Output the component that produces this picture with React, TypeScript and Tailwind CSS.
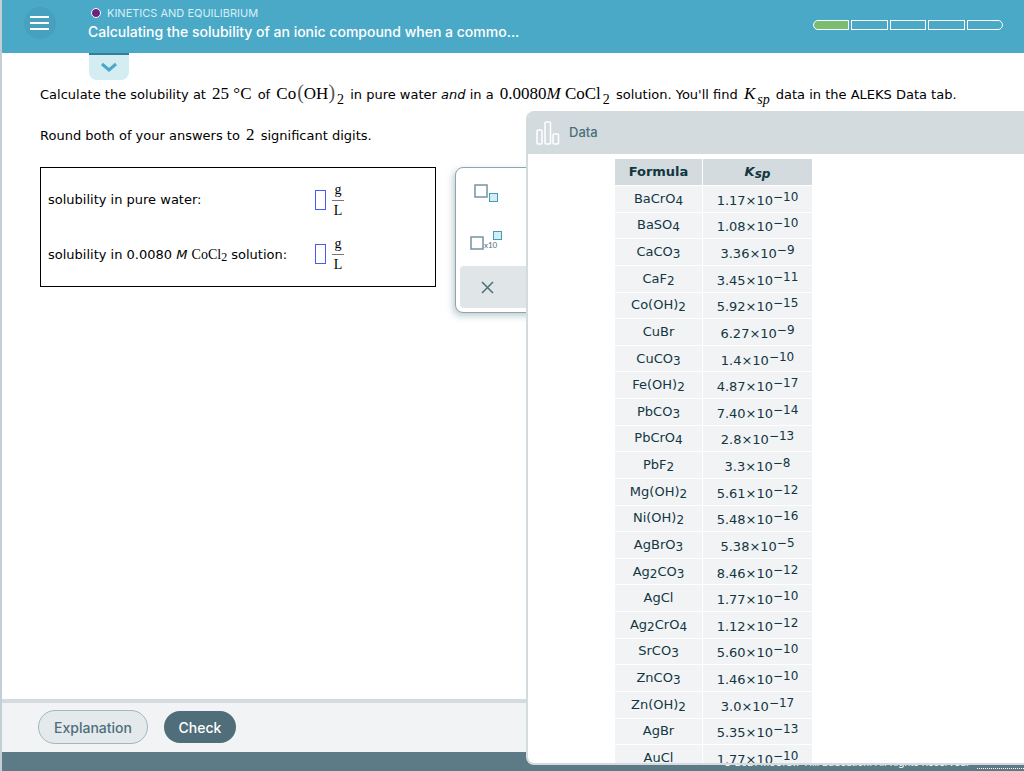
import React, { useState } from 'react';

interface KspRow {
  formula: string;
  value: string;
  exponent: string;
}

const kspData: KspRow[] = [
  { formula: 'BaCrO4', value: '1.17', exponent: '10' },
  { formula: 'BaSO4', value: '1.08', exponent: '10' },
  { formula: 'CaCO3', value: '3.36', exponent: '9' },
  { formula: 'CaF2', value: '3.45', exponent: '11' },
  { formula: 'Co(OH)2', value: '5.92', exponent: '15' },
  { formula: 'CuBr', value: '6.27', exponent: '9' },
  { formula: 'CuCO3', value: '1.4', exponent: '10' },
  { formula: 'Fe(OH)2', value: '4.87', exponent: '17' },
  { formula: 'PbCO3', value: '7.40', exponent: '14' },
  { formula: 'PbCrO4', value: '2.8', exponent: '13' },
  { formula: 'PbF2', value: '3.3', exponent: '8' },
  { formula: 'Mg(OH)2', value: '5.61', exponent: '12' },
  { formula: 'Ni(OH)2', value: '5.48', exponent: '16' },
  { formula: 'AgBrO3', value: '5.38', exponent: '5' },
  { formula: 'Ag2CO3', value: '8.46', exponent: '12' },
  { formula: 'AgCl', value: '1.77', exponent: '10' },
  { formula: 'Ag2CrO4', value: '1.12', exponent: '12' },
  { formula: 'SrCO3', value: '5.60', exponent: '10' },
  { formula: 'ZnCO3', value: '1.46', exponent: '10' },
  { formula: 'Zn(OH)2', value: '3.0', exponent: '17' },
  { formula: 'AgBr', value: '5.35', exponent: '13' },
  { formula: 'AuCl', value: '1.77', exponent: '10' },
];

// Digits of a formula are set as subscripts
const Formula: React.FC<{ text: string }> = ({ text }) => (
  <>
    {text.split(/(\d)/).map((part, i) =>
      /\d/.test(part) ? <sub key={i} className="-bottom-[2px] text-[12px]">{part}</sub> : <span key={i}>{part}</span>
    )}
  </>
);

const Serif: React.FC<{ children: React.ReactNode }> = ({ children }) => (
  <span className="mx-[2px] font-['Liberation_Serif',serif] text-[17px]">{children}</span>
);

const SerifSub: React.FC<{ children: React.ReactNode }> = ({ children }) => (
  <sub className="-bottom-[5px] ml-[2px] text-[14px]">{children}</sub>
);

const AnswerField: React.FC<{ id: string; value: string; onChange: (v: string) => void }> = ({ id, value, onChange }) => (
  <div className="flex items-center gap-[6px]">
    <input
      id={id}
      value={value}
      onChange={(e) => onChange(e.target.value)}
      className="h-5 w-[11px] border border-[#4a5cf0] bg-white text-[13px] outline-none"
    />
    <span className="flex w-3 flex-col items-center font-['Liberation_Serif',serif] text-[14px] leading-[20px]">
      <span className="w-full border-b border-[#777] text-center">g</span>
      <span>L</span>
    </span>
  </div>
);

const Header: React.FC = () => (
  <header className="flex h-[53px] shrink-0 bg-[#4ba9c8] pl-[22px] pr-[21px] text-white">
    <button aria-label="Menu" className="mt-[7px] flex size-8 items-center justify-center rounded-full bg-[#46a0be]">
      <svg width="20" height="16" viewBox="0 0 20 16" stroke="white" strokeWidth="2">
        <path d="M0 2h19M0 8h19M0 14h19" />
      </svg>
    </button>
    <div className="ml-8 min-w-0 flex-1 pt-[5px]">
      <p className="flex items-center gap-[6px] pl-[3px] text-[11px] leading-4 text-[#d5eff6]">
        <span className="size-[10px] rounded-full border border-white bg-[#6b2382]" />
        KINETICS AND EQUILIBRIUM
      </p>
      <h1 className="truncate text-[14px] font-medium leading-[22px]">
        Calculating the solubility of an ionic compound when a commo...
      </h1>
    </div>
    <div className="mt-5 flex h-[10px] w-[190px] gap-[2px]">
      <span className="flex-1 rounded-l-full border border-white bg-[#7bbd70]" />
      <span className="flex-1 border border-white" />
      <span className="flex-1 border border-white" />
      <span className="flex-1 border border-white" />
      <span className="flex-1 rounded-r-full border border-white" />
    </div>
  </header>
);

const MathTools: React.FC = () => (
  <div className="flex h-[146px] w-36 flex-col rounded-lg border border-[#8fa5ad] bg-white p-1 shadow-[-2px_3px_7px_rgba(70,110,125,0.35)]">
    <button aria-label="Subscript" className="flex h-11 items-center pl-[14px]">
      <svg width="26" height="20" viewBox="0 0 26 20">
        <rect x="1" y="1" width="12" height="12" fill="white" stroke="#7893a0" strokeWidth="1.5" />
        <rect x="15.5" y="9.5" width="8" height="8" fill="#d3edf2" stroke="#439db8" />
      </svg>
    </button>
    <button aria-label="Scientific notation" className="flex h-[50px] items-center pl-[10px]">
      <svg width="36" height="22" viewBox="0 0 36 22">
        <rect x="1" y="7" width="12" height="12" fill="white" stroke="#7893a0" strokeWidth="1.5" />
        <text x="14" y="18" fontSize="8" fontFamily="Lato, sans-serif" fill="#4c6f7c">x10</text>
        <rect x="23.5" y="1.5" width="8" height="8" fill="#d3edf2" stroke="#439db8" />
      </svg>
    </button>
    <button aria-label="Clear" className="flex flex-1 items-center rounded bg-[#e0e5e8] pl-[21px]">
      <svg width="13" height="13" viewBox="0 0 13 13" stroke="#4c6f7c" strokeWidth="1.5">
        <path d="M1 1l11 11M12 1L1 12" />
      </svg>
    </button>
  </div>
);

const DataPanel: React.FC = () => (
  <aside className="absolute bottom-[6px] left-[524px] right-0 top-[111px] flex flex-col overflow-hidden rounded-l-lg border-b-2 border-l-2 border-[#d3dbde] bg-white">
    <h2 className="flex h-[43px] shrink-0 items-center gap-[9px] bg-[#d3dbde] pl-2 text-[13px] font-medium text-[#4c6f7c]">
      <svg width="24" height="24" viewBox="0 0 24 24" fill="none" stroke="white" strokeWidth="1.5">
        <rect x="1" y="9" width="5" height="14" rx="1" />
        <rect x="9" y="1" width="5.500" height="22" rx="1" />
        <rect x="17" y="13" width="5.500" height="10" rx="1" />
      </svg>
      Data
    </h2>
    <div className="min-h-0 flex-1 overflow-hidden pl-[86px] pt-1">
      <table className="h-[614px] w-[199px] table-fixed border-separate border-spacing-[1px] text-center font-['DejaVu_Sans',sans-serif] text-[13px] leading-[18px] text-[#123642]">
        <thead>
          <tr className="h-[26px] bg-[#d3dbde]">
            <th className="h-[26px] w-[87px] p-0">Formula</th>
            <th className="h-[26px] p-0 italic">K<sub className="-bottom-[2px] text-[12px]">sp</sub></th>
          </tr>
        </thead>
        <tbody>
          {kspData.map((row) => (
            <tr key={row.formula} className="bg-[#f1f3f5]">
              <td className="p-0"><Formula text={row.formula} /></td>
              <td className="p-0 pt-1">
                {row.value}×10<sup className="-top-1 text-[12px]">−{row.exponent}</sup>
              </td>
            </tr>
          ))}
        </tbody>
      </table>
    </div>
  </aside>
);

const App: React.FC = () => {
  const [pureWater, setPureWater] = useState('');
  const [solution, setSolution] = useState('');

  return (
    <div className="relative flex h-screen flex-col overflow-hidden border-l-2 border-[#c3cfd4] bg-white font-[Inter,sans-serif]">
      <Header />
      <main className="flex-1 pl-[38px] font-['DejaVu_Sans',sans-serif] text-[13px] text-black">
        <button aria-label="Expand" className="ml-[49px] flex h-[27px] w-10 items-center justify-center rounded-b-lg border-t-2 border-[#2f8098] bg-[#d3edf2]">
          <svg width="16" height="11" viewBox="0 0 16 11" fill="none" stroke="#4ba9c8" strokeWidth="3">
            <path d="M1 2l7 6l7-6" />
          </svg>
        </button>
        <p className="whitespace-nowrap leading-[24px]">
          Calculate the solubility at <Serif>25 °C</Serif> of{' '}
          <Serif>
            Co<span className="ml-px text-[20px] text-[#555]">(</span>OH<span className="text-[20px] text-[#555]">)</span>
            <SerifSub>2</SerifSub>
          </Serif>{' '}
          in pure water <em>and</em> in a{' '}
          <Serif>0.0080<em>M</em> CoCl<SerifSub>2</SerifSub></Serif> solution. You'll find{' '}
          <Serif><em>K<SerifSub>sp</SerifSub></em></Serif> data in the ALEKS Data tab.
        </p>
        <p className="mt-4 leading-[24px]">
          Round both of your answers to <Serif>2</Serif> significant digits.
        </p>
        <div className="mt-[19px] flex items-start gap-[19px]">
          <div className="grid h-[120px] w-[396px] grid-cols-[267px_1fr] content-center gap-y-[13px] border border-black pl-[7px]">
            <label htmlFor="pure" className="self-center">solubility in pure water:</label>
            <AnswerField id="pure" value={pureWater} onChange={setPureWater} />
            <label htmlFor="solution" className="self-center whitespace-nowrap">
              solubility in 0.0080 <em>M</em>{' '}
              <span className="font-['Liberation_Serif',serif] text-[14px]">CoCl<sub className="-bottom-[2px] text-[12px]">2</sub></span> solution:
            </label>
            <AnswerField id="solution" value={solution} onChange={setSolution} />
          </div>
          <MathTools />
        </div>
      </main>
      <div className="flex h-[53px] shrink-0 items-center gap-4 border-t-4 border-[#d3dbde] bg-[#f1f3f5] pb-px pl-9 text-[14px] font-medium">
        <button className="h-[34px] w-[110px] rounded-full border border-[#a3b7be] bg-[#e4e9eb] text-[#4c6f7c]">Explanation</button>
        <button className="h-8 w-[72px] rounded-full bg-[#4f6e79] text-white">Check</button>
      </div>
      <footer className="flex h-[19px] shrink-0 items-center justify-end gap-2 whitespace-nowrap bg-[#5d7b86] text-[10px] leading-[14px] text-white">
        <span>© 2021 McGraw-Hill Education. All Rights Reserved.</span>
        <a href="#" className="w-[47px] overflow-hidden border-b border-dotted border-white">Terms of Use</a>
      </footer>
      <DataPanel />
    </div>
  );
};

export default App;
